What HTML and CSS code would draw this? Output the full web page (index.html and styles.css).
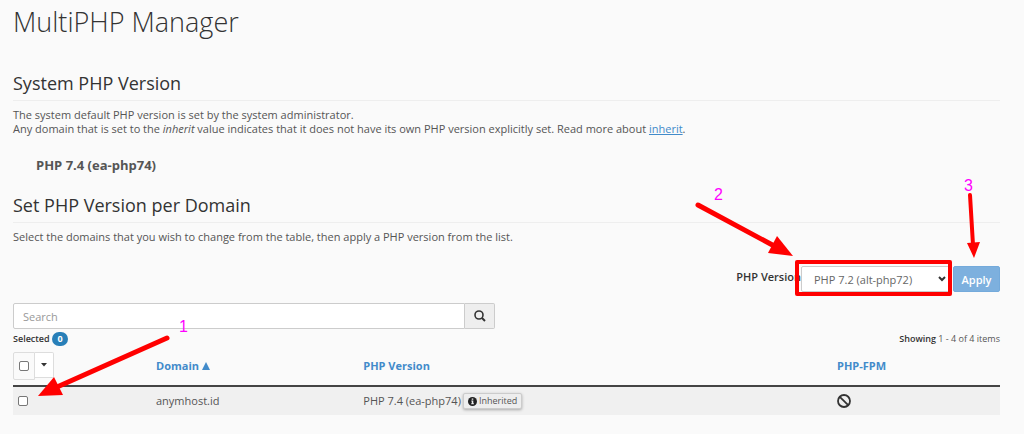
FILE: index.html
```html
<!DOCTYPE html>
<html lang="en">
<head>
    <meta charset="UTF-8">
    <meta name="viewport" content="width=device-width, initial-scale=1.0">
    <title>MultiPHP Manager</title>
    <link rel="stylesheet" href="styles.css">
</head>
<body>
    <main class="page">
        <h1>MultiPHP Manager</h1>

        <section>
            <h2>System PHP Version</h2>
            <p>The system default PHP version is set by the system administrator.<br>
            Any domain that is set to the <em>inherit</em> value indicates that it does not have its own PHP version explicitly set. Read more about <a href="#">inherit</a>.</p>
            <div class="system-version">PHP 7.4 (ea-php74)</div>
        </section>

        <section>
            <h2>Set PHP Version per Domain</h2>
            <p>Select the domains that you wish to change from the table, then apply a PHP version from the list.</p>

            <form class="version-form">
                <label for="php-version">PHP Version</label>
                <div class="select-wrap">
                    <select id="php-version" name="php-version">
                        <option>PHP 7.2 (alt-php72)</option>
                    </select>
                    <svg class="chevron" width="8" height="6" viewBox="0 0 8 6"><path d="M1 1l3 3 3-3" fill="none" stroke="#333" stroke-width="2"/></svg>
                </div>
                <button type="button" class="apply">Apply</button>
                <svg class="notes notes-right" width="320" height="130" viewBox="0 0 320 130">
                    <g stroke="#f00" fill="none">
                        <path d="M18 35L98 78" stroke-width="5" stroke-linecap="round"/>
                        <path d="M290 25L293 75" stroke-width="4" stroke-linecap="round"/>
                        <rect x="117" y="92" width="153" height="32" stroke-width="4" stroke-linejoin="round"/>
                    </g>
                    <path d="M97 66L113 86L88 83Z" fill="#f00"/>
                    <path d="M287 73L300 72L294 88Z" fill="#f00"/>
                    <text x="34" y="30">2</text>
                    <text x="284" y="21">3</text>
                </svg>
            </form>
        </section>

        <section class="domains">
            <div class="search">
                <input type="text" placeholder="Search" aria-label="Search">
                <button type="button" aria-label="Search domains">
                    <svg width="12" height="12" viewBox="0 0 12 12" fill="none" stroke="#333"><circle cx="5" cy="5" r="4" stroke-width="1.6"/><path d="M8 8l3 3" stroke-width="2"/></svg>
                </button>
            </div>

            <div class="counts">
                <div><b>Selected</b> <span class="badge">0</span></div>
                <div><b>Showing</b> 1 - 4 of 4 items</div>
            </div>

            <table>
                <thead>
                    <tr>
                        <th class="col-check">
                            <div class="check-group">
                                <label class="check-all"><input type="checkbox" aria-label="Select all"></label>
                                <button type="button" class="check-menu" aria-label="Selection options">
                                    <svg width="6" height="4" viewBox="0 0 6 4"><path d="M0 0h6L3 3.5z" fill="#333"/></svg>
                                </button>
                            </div>
                        </th>
                        <th class="col-domain"><a href="#">Domain <svg width="8" height="8" viewBox="0 0 8 8"><path d="M4 0l4 8H0z" fill="#428bca"/></svg></a></th>
                        <th class="col-version"><a href="#">PHP Version</a></th>
                        <th><a href="#">PHP-FPM</a></th>
                    </tr>
                </thead>
                <tbody>
                    <tr>
                        <td class="row-check"><input type="checkbox" aria-label="anymhost.id"></td>
                        <td>anymhost.id</td>
                        <td>
                            <div class="version">
                                <span>PHP 7.4 (ea-php74)</span>
                                <span class="inherited">
                                    <svg width="9" height="9" viewBox="0 0 9 9"><circle cx="4.5" cy="4.5" r="4.5" fill="#222"/><path d="M3.7 1.5h1.6v1.3H3.7zM3.3 3.6h2v2.7h.6v1H3.2v-1h.6V4.5h-.5z" fill="#eee"/></svg>
                                    Inherited
                                </span>
                            </div>
                        </td>
                        <td>
                            <svg class="ban" width="14" height="14" viewBox="0 0 14 14" fill="none" stroke="#333" stroke-width="1.8"><circle cx="7" cy="7" r="6"/><path d="M2.8 2.8l8.4 8.4"/></svg>
                        </td>
                    </tr>
                </tbody>
            </table>

            <svg class="notes notes-left" width="200" height="100" viewBox="0 0 200 100">
                <path d="M154 35L44 84" stroke="#f00" stroke-width="5" stroke-linecap="round"/>
                <path d="M41 74L50 92L25 93Z" fill="#f00"/>
                <text x="166" y="29">1</text>
            </svg>
        </section>
    </main>
</body>
</html>
```

FILE: styles.css
```css
* {
    box-sizing: border-box;
}

body {
    margin: 0;
    background-color: #fafafa;
    color: #555;
    font-family: "Open Sans", "Noto Sans", sans-serif;
    font-size: 11px;
    line-height: 14px;
}

.page {
    padding: 6px 24px 18px 13px;
}

h1 {
    margin: 0 0 33px;
    color: #333;
    font-size: 27px;
    font-weight: 300;
    line-height: 32px;
}

h2 {
    margin: 0 0 7px;
    padding-bottom: 5px;
    border-bottom: 1px solid #eee;
    color: #333;
    font-size: 18px;
    font-weight: 400;
    line-height: 24px;
}

p {
    margin: 0;
}

a {
    color: #428bca;
}

input, select, button {
    font-family: inherit;
    font-size: 11px;
}

input[type="checkbox"] {
    appearance: none;
    display: block;
    width: 10px;
    height: 10px;
    margin: 0;
    border: 1px solid #777;
    border-radius: 2px;
    background-color: #fff;
}

.system-version {
    margin: 19px 0 18px;
    padding-left: 23px;
    font-size: 13px;
    font-weight: 700;
    line-height: 20px;
}

/* version picker */
.version-form {
    position: relative;
    display: flex;
    justify-content: flex-end;
    margin-top: 22px;
}

.version-form label {
    color: #333;
    font-weight: 600;
    line-height: 22px;
}

.select-wrap {
    position: relative;
    width: 149px;
    margin-right: 3px;
}

.select-wrap select {
    appearance: none;
    width: 100%;
    height: 26px;
    padding: 0 12px;
    border: 1px solid #ccc;
    border-radius: 2px;
    background-color: #fff;
    color: #666;
}

.chevron {
    position: absolute;
    top: 10px;
    right: 4px;
}

.apply {
    width: 47px;
    height: 26px;
    padding: 0;
    border: 1px solid #74aadb;
    border-radius: 2px;
    background-color: #7db0de;
    color: #fff;
    font-weight: 600;
}

/* numbered arrows */
.notes {
    position: absolute;
    pointer-events: none;
    font-family: "Liberation Sans", Arial, sans-serif;
    font-size: 16px;
    fill: #f0f;
}

.notes-right {
    top: -96px;
    right: 0;
}

.notes-left {
    top: 0;
    left: 0;
}

/* domain list */
.domains {
    position: relative;
    margin-top: 11px;
}

.search {
    display: flex;
    max-width: 482px;
    height: 26px;
}

.search input {
    flex: 1;
    padding: 0 9px;
    border: 1px solid #ccc;
    border-radius: 2px 0 0 2px;
    background-color: #fff;
}

.search input::placeholder {
    color: #999;
}

.search button {
    display: flex;
    align-items: center;
    justify-content: center;
    width: 30px;
    padding: 0;
    border: 1px solid #ccc;
    border-left: 0;
    border-radius: 0 2px 2px 0;
    background-color: #eee;
}

.counts {
    display: flex;
    justify-content: space-between;
    margin-top: 3px;
    font-size: 9px;
}

.counts b {
    color: #333;
    font-weight: 600;
}

.badge {
    display: inline-block;
    width: 16px;
    border-radius: 7px;
    background-color: #287fb8;
    color: #fff;
    font-weight: 700;
    text-align: center;
}

table {
    width: 100%;
    border-collapse: separate;
    border-spacing: 0;
    table-layout: fixed;
}

th, td {
    padding: 0;
    text-align: left;
}

th {
    height: 41px;
    border-bottom: 2px solid #444;
    font-weight: 700;
}

th a {
    text-decoration: none;
}

td {
    height: 28px;
    background-color: #f0f0f0;
}

.col-check {
    width: 143px;
}

.col-domain {
    width: 21%;
}

.col-version {
    width: 48%;
}

.check-group {
    display: flex;
    align-items: flex-start;
}

.check-all {
    padding: 8px 5px;
    border: 1px solid #ddd;
    border-radius: 2px 0 0 2px;
}

.check-menu {
    display: flex;
    align-items: center;
    justify-content: center;
    width: 19px;
    height: 26px;
    padding: 0;
    border: 1px solid #ddd;
    border-left: 0;
    border-radius: 0 2px 2px 0;
    background-color: #fff;
}

.row-check {
    padding-left: 5px;
}

.version {
    display: flex;
    align-items: center;
    gap: 2px;
}

.inherited {
    display: flex;
    align-items: center;
    gap: 2px;
    padding: 0 4px;
    border: 1px solid #ccc;
    border-radius: 2px;
    background-color: #eee;
    box-shadow: 0 1px 3px rgba(0, 0, 0, 0.3);
    font-size: 9px;
}

.ban {
    display: block;
}
```
